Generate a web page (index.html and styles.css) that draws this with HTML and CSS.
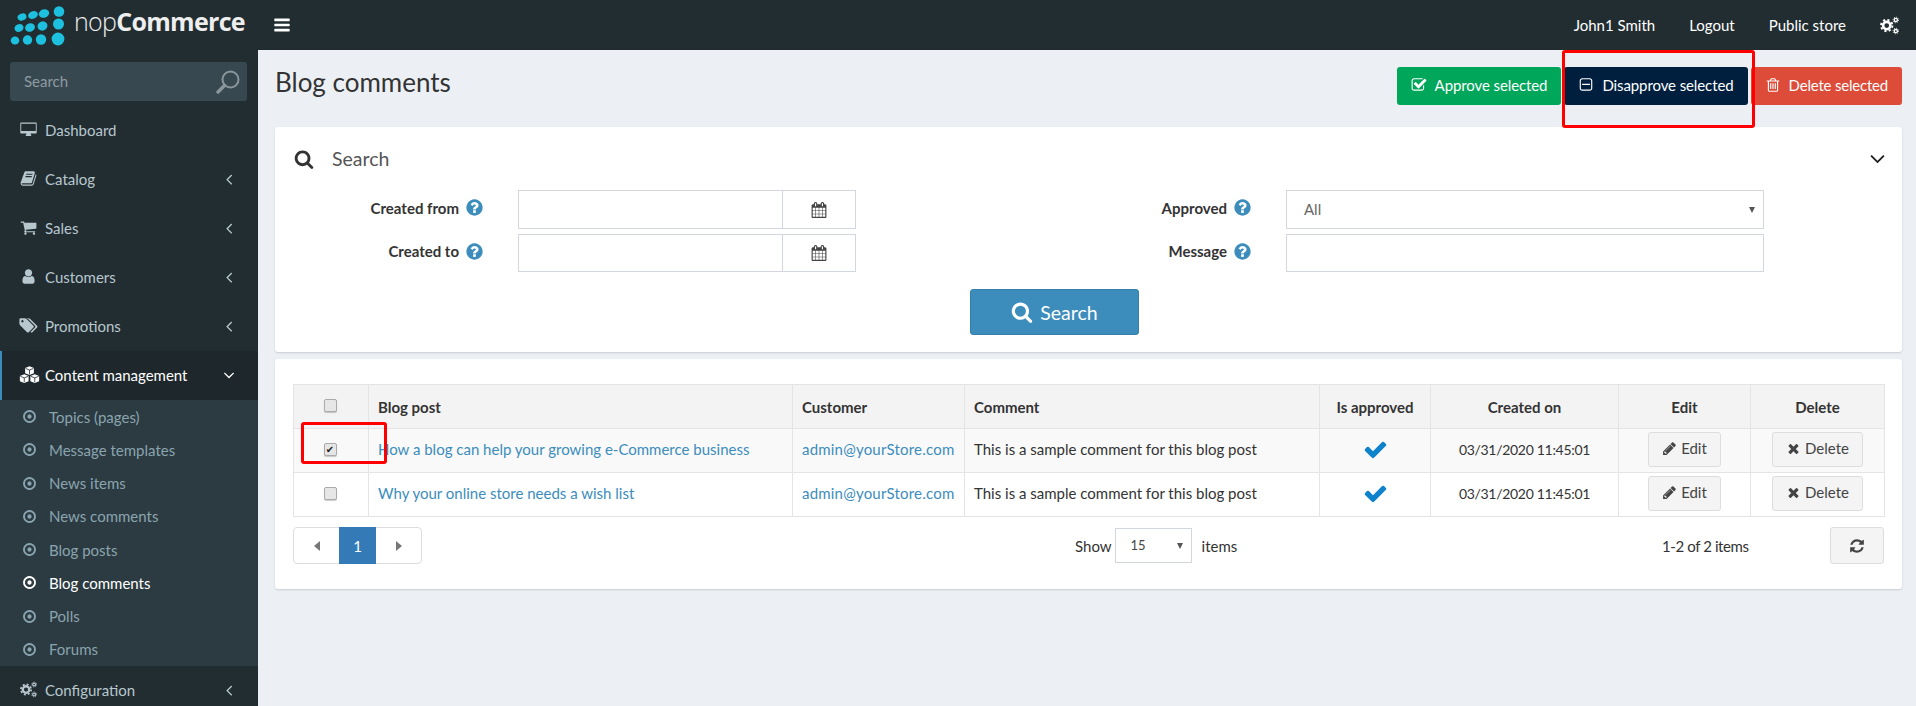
FILE: index.html
```html
<!DOCTYPE html>
<html lang="en">
<head>
    <meta charset="UTF-8">
    <meta name="viewport" content="width=device-width, initial-scale=1.0">
    <title>Blog comments</title>
    <link rel="stylesheet" href="styles.css">
</head>
<body>
    <!-- icon set -->
    <svg class="icon-defs" xmlns="http://www.w3.org/2000/svg">
        <symbol id="i-search" viewBox="0 0 1792 1792"><path d="M1216 832q0-185-131.500-316.500t-316.500-131.500-316.500 131.500-131.500 316.500 131.500 316.500 316.500 131.500 316.500-131.500 131.500-316.500zm512 832q0 52-38 90t-90 38q-54 0-90-38l-343-342q-179 124-399 124-143 0-273.500-55.500t-225-150-150-225-55.500-273.500 55.500-273.500 150-225 225-150 273.500-55.500 273.500 55.500 225 150 150 225 55.500 273.500q0 220-124 399l343 343q37 37 37 90z"/></symbol>
        <symbol id="i-left" viewBox="0 0 1792 1792"><path d="M1203 544q0 13-10 23l-393 393 393 393q10 10 10 23t-10 23l-50 50q-10 10-23 10t-23-10l-466-466q-10-10-10-23t10-23l466-466q10-10 23-10t23 10l50 50q10 10 10 23z"/></symbol>
        <symbol id="i-down" viewBox="0 0 1792 1792"><path d="M1395 736q0 13-10 23l-466 466q-10 10-23 10t-23-10l-466-466q-10-10-10-23t10-23l50-50q10-10 23-10t23 10l393 393 393-393q10-10 23-10t23 10l50 50q10 10 10 23z"/></symbol>
        <symbol id="i-check" viewBox="0 0 1792 1792"><path d="M1671 566q0 40-28 68l-724 724-136 136q-28 28-68 28t-68-28l-136-136-362-362q-28-28-28-68t28-68l136-136q28-28 68-28t68 28l294 295 656-657q28-28 68-28t68 28l136 136q28 28 28 68z"/></symbol>
        <symbol id="i-times" viewBox="0 0 1792 1792"><path d="M1490 1322q0 40-28 68l-136 136q-28 28-68 28t-68-28l-294-294-294 294q-28 28-68 28t-68-28l-136-136q-28-28-28-68t28-68l294-294-294-294q-28-28-28-68t28-68l136-136q28-28 68-28t68 28l294 294 294-294q28-28 68-28t68 28l136 136q28 28 28 68t-28 68l-294 294 294 294q28 28 28 68z"/></symbol>
        <symbol id="i-help" viewBox="0 0 1792 1792"><path d="M1024 1376v-192q0-14-9-23t-23-9h-192q-14 0-23 9t-9 23v192q0 14 9 23t23 9h192q14 0 23-9t9-23zm256-672q0-88-55.500-163t-138.500-116-170-41q-243 0-371 213-15 24 8 42l132 100q7 6 19 6 16 0 25-12 53-68 86-92 34-24 86-24 48 0 85.500 26t37.500 59q0 38-20 61t-68 45q-63 28-115.500 86.500t-52.500 125.500v36q0 14 9 23t23 9h192q14 0 23-9t9-23q0-19 21.500-49.500t54.500-49.500q32-18 49-28.500t46-35 44.500-48 28-60.500 12.500-81zm384 192q0 209-103 385.500t-279.500 279.500-385.500 103-385.500-103-279.500-279.500-103-385.500 103-385.500 279.500-279.500 385.500-103 385.500 103 279.500 279.500 103 385.500z"/></symbol>
        <symbol id="i-dot" viewBox="0 0 1792 1792"><path d="M1152 896q0 106-75 181t-181 75-181-75-75-181 75-181 181-75 181 75 75 181zm-256-544q-148 0-273 73t-198 198-73 273 73 273 198 198 273 73 273-73 198-198 73-273-73-273-198-198-273-73zm768 544q0 209-103 385.500t-279.500 279.500-385.500 103-385.500-103-279.500-279.500-103-385.500 103-385.500 279.500-279.500 385.500-103 385.500 103 279.500 279.500 103 385.500z"/></symbol>
        <symbol id="i-bars" viewBox="0 0 1792 1792"><path d="M1664 1344v128q0 26-19 45t-45 19h-1408q-26 0-45-19t-19-45v-128q0-26 19-45t45-19h1408q26 0 45 19t19 45zm0-512v128q0 26-19 45t-45 19h-1408q-26 0-45-19t-19-45v-128q0-26 19-45t45-19h1408q26 0 45 19t19 45zm0-512v128q0 26-19 45t-45 19h-1408q-26 0-45-19t-19-45v-128q0-26 19-45t45-19h1408q26 0 45 19t19 45z"/></symbol>
        <symbol id="i-pencil" viewBox="0 0 1792 1792"><path d="M491 1536l91-91-235-235-91 91v107h128v128h107zm523-928q0-22-22-22-10 0-17 7l-542 542q-7 7-7 17 0 22 22 22 10 0 17-7l542-542q7-7 7-17zm-54-192l416 416-832 832h-416v-416zm683 96q0 53-37 90l-166 166-416-416 166-165q36-38 90-38 53 0 91 38l235 234q37 39 37 91z"/></symbol>
        <symbol id="i-refresh" viewBox="0 0 1792 1792"><path d="M1639 1056q0 5-1 7-64 268-268 434.500t-478 166.500q-146 0-282.500-55t-243.500-157l-129 129q-19 19-45 19t-45-19-19-45v-448q0-26 19-45t45-19h448q26 0 45 19t19 45-19 45l-137 137q71 66 161 102t187 36q134 0 250-65t186-179q11-17 53-117 8-23 30-23h192q13 0 22.500 9.500t9.500 22.500zm25-800v448q0 26-19 45t-45 19h-448q-26 0-45-19t-19-45 19-45l138-138q-148-137-349-137-134 0-250 65t-186 179q-11 17-53 117-8 23-30 23h-199q-13 0-22.500-9.500t-9.500-22.500v-7q65-268 270-434.500t480-166.500q146 0 284 55.500t245 156.500l130-129q19-19 45-19t45 19 19 45z"/></symbol>
        <symbol id="i-desktop" viewBox="0 0 1920 1792"><path fill-rule="evenodd" d="M160 160h1600q64 0 64 64v1024q0 64-64 64h-576q0 90 64 192v64h-576v-64q64-102 64-192h-576q-64 0-64-64v-1024q0-64 64-64zm32 128v768h1536v-768z"/></symbol>
        <symbol id="i-book" viewBox="0 0 1792 1792"><path d="M1703 478q40 57 18 129l-275 906q-19 64-76.500 107.500t-122.500 43.500h-923q-77 0-148.500-53.500t-99.500-131.500q-24-67-2-127 0-4 3-27t4-37q1-8-3-21.500t-3-19.500q2-11 8-21t16.500-23.500 16.500-23.500q23-38 45-91.500t30-91.500q3-10 .5-30t-.5-28q3-11 17-28t17-23q21-36 42-92t25-90q1-9-2.500-32t.5-28q4-13 22-30.500t22-22.500q19-26 42.500-84.500t27.500-96.500q1-8-3-25.500t-2-26.500q2-8 9-18t18-23 17-21q8-12 16.500-30.500t15-35 16-36 19.500-32 26.500-23.500 36-11.500 47.500 5.500l-1 3q38-9 51-9h761q74 0 114 56t18 130l-274 906q-36 119-71.500 153.500t-128.500 34.500h-869q-27 0-38 15-11 16-1 43 24 70 144 70h923q29 0 56-15.500t35-41.500l300-987q7-22 5-57 38 15 59 43zm-1064 2q-4 13 2 22.500t20 9.500h608q13 0 25.500-9.500t16.500-22.500l21-64q4-13-2-22.500t-20-9.500h-608q-13 0-25.500 9.500t-16.500 22.500zm-83 256q-4 13 2 22.500t20 9.500h608q13 0 25.500-9.500t16.500-22.500l21-64q4-13-2-22.500t-20-9.500h-608q-13 0-25.500 9.500t-16.500 22.500z"/></symbol>
        <symbol id="i-cart" viewBox="0 0 1792 1792"><path d="M704 1536q0 52-38 90t-90 38-90-38-38-90 38-90 90-38 90 38 38 90zm896 0q0 52-38 90t-90 38-90-38-38-90 38-90 90-38 90 38 38 90zm128-1088v512q0 24-16.500 42.500t-40.500 21.500l-1044 122q13 60 13 70 0 16-24 64h920q26 0 45 19t19 45-19 45-45 19h-1024q-26 0-45-19t-19-45q0-11 8-31.500t16-36 21.500-40 15.500-29.500l-177-823h-204q-26 0-45-19t-19-45 19-45 45-19h256q16 0 28.500 6.500t19.500 15.500 13 24.500 8 26 5.500 29.500 4.500 26h1201q26 0 45 19t19 45z"/></symbol>
        <symbol id="i-user" viewBox="0 0 1792 1792"><path d="M1536 1399q0 109-62.500 187t-150.500 78h-854q-88 0-150.500-78t-62.500-187q0-85 8.500-160.500t31.500-152 58.500-131 94-89 134.500-34.500q131 128 313 128t313-128q76 0 134.500 34.500t94 89 58.500 131 31.500 152 8.500 160.500zm-256-887q0 159-112.500 271.500t-271.500 112.500-271.500-112.500-112.500-271.500 112.500-271.500 271.500-112.500 271.500 112.500 112.500 271.500z"/></symbol>
        <symbol id="i-tags" viewBox="0 0 1920 1792"><path d="M448 448q0-53-37.500-90.500t-90.500-37.500-90.500 37.500-37.500 90.500 37.500 90.500 90.500 37.500 90.500-37.500 37.500-90.500zm1067 576q0 53-37 90l-491 492q-39 37-91 37-53 0-90-37l-715-716q-38-37-64.500-101t-26.500-117v-416q0-52 38-90t90-38h416q53 0 117 26.500t102 64.500l715 714q37 39 37 91zm384 0q0 53-37 90l-491 492q-39 37-91 37-36 0-59-14t-53-45l470-470q37-37 37-90 0-52-37-91l-715-714q-38-38-102-64.500t-117-26.500h224q53 0 117 26.500t102 64.500l715 714q37 39 37 91z"/></symbol>
        <symbol id="i-calendar" viewBox="0 0 1664 1792"><path d="M128 1664h288v-288h-288v288zm352 0h320v-288h-320v288zm-352-352h288v-320h-288v320zm352 0h320v-320h-320v320zm-352-384h288v-288h-288v288zm736 736h320v-288h-320v288zm-384-736h320v-288h-320v288zm768 736h288v-288h-288v288zm-384-352h320v-320h-320v320zm-352-864v-288q0-13-9.500-22.500t-22.500-9.500h-64q-13 0-22.500 9.500t-9.500 22.500v288q0 13 9.500 22.500t22.500 9.500h64q13 0 22.500-9.500t9.500-22.500zm736 864h288v-320h-288v320zm-384-384h320v-288h-320v288zm384 0h288v-288h-288v288zm32-480v-288q0-13-9.500-22.500t-22.500-9.500h-64q-13 0-22.500 9.500t-9.500 22.500v288q0 13 9.500 22.500t22.500 9.500h64q13 0 22.500-9.500t9.500-22.500zm384-64v1280q0 52-38 90t-90 38h-1408q-52 0-90-38t-38-90v-1280q0-52 38-90t90-38h128v-96q0-66 47-113t113-47h64q66 0 113 47t47 113v96h384v-96q0-66 47-113t113-47h64q66 0 113 47t47 113v96h128q52 0 90 38t38 90z"/></symbol>
        <symbol id="i-approve" viewBox="0 0 1792 1792"><path d="M1472 930v318q0 119-84.500 203.500t-203.500 84.500h-832q-119 0-203.500-84.500t-84.500-203.500v-832q0-119 84.500-203.500t203.500-84.500h832q63 0 117 25 15 7 18 23 3 17-9 29l-49 49q-10 10-23 10-3 0-9-2-23-6-45-6h-832q-66 0-113 47t-47 113v832q0 66 47 113t113 47h832q66 0 113-47t47-113v-254q0-13 9-22l64-64q10-10 23-10 6 0 12 3 20 8 20 29zm231-489l-814 814q-24 24-57 24t-57-24l-430-430q-24-24-24-57t24-57l110-110q24-24 57-24t57 24l263 263 647-647q24-24 57-24t57 24l110 110q24 24 24 57t-24 57z"/></symbol>
        <symbol id="i-minus" viewBox="0 0 1792 1792"><path d="M1344 800v64q0 14-9 23t-23 9h-832q-14 0-23-9t-9-23v-64q0-14 9-23t23-9h832q14 0 23 9t9 23zm128 448v-832q0-66-47-113t-113-47h-832q-66 0-113 47t-47 113v832q0 66 47 113t113 47h832q66 0 113-47t47-113zm128-832v832q0 119-84.500 203.500t-203.500 84.500h-832q-119 0-203.500-84.500t-84.500-203.500v-832q0-119 84.500-203.500t203.500-84.500h832q119 0 203.500 84.500t84.500 203.500z"/></symbol>
        <symbol id="i-trash" viewBox="0 0 1792 1792"><path d="M704 736v576q0 14-9 23t-23 9h-64q-14 0-23-9t-9-23v-576q0-14 9-23t23-9h64q14 0 23 9t9 23zm256 0v576q0 14-9 23t-23 9h-64q-14 0-23-9t-9-23v-576q0-14 9-23t23-9h64q14 0 23 9t9 23zm256 0v576q0 14-9 23t-23 9h-64q-14 0-23-9t-9-23v-576q0-14 9-23t23-9h64q14 0 23 9t9 23zm128 724v-948h-896v948q0 22 7 40.500t14.500 27 10.500 8.500h832q3 0 10.500-8.500t14.500-27 7-40.500zm-672-1076h448l-48-117q-7-9-17-11h-317q-10 2-17 11zm928 32v64q0 14-9 23t-23 9h-96v948q0 83-47 143.500t-113 60.500h-832q-66 0-113-58.500t-47-141.500v-952h-96q-14 0-23-9t-9-23v-64q0-14 9-23t23-9h309l70-167q15-37 54-63t79-26h320q40 0 79 26t54 63l70 167h309q14 0 23 9t9 23z"/></symbol>
        <symbol id="i-cogs" viewBox="0 0 24 24">
            <circle cx="8.500" cy="12" r="4.600" fill="none" stroke="currentColor" stroke-width="3.200"/>
            <circle cx="8.500" cy="12" r="7.200" fill="none" stroke="currentColor" stroke-width="2.400" stroke-dasharray="2.800 2.850"/>
            <circle cx="20" cy="5" r="2" fill="none" stroke="currentColor" stroke-width="1.700"/>
            <circle cx="20" cy="5" r="3.500" fill="none" stroke="currentColor" stroke-width="1.200" stroke-dasharray="1.300 1.450"/>
            <circle cx="20" cy="19" r="2" fill="none" stroke="currentColor" stroke-width="1.700"/>
            <circle cx="20" cy="19" r="3.500" fill="none" stroke="currentColor" stroke-width="1.200" stroke-dasharray="1.300 1.450"/>
        </symbol>
        <symbol id="i-cubes" viewBox="0 0 24 20">
            <path d="M12 0l5 2v6l-5 2-5-2V2z"/>
            <path d="M6 9l5 2v6l-5 2-5-2v-6z"/>
            <path d="M18 9l5 2v6l-5 2-5-2v-6z"/>
            <path d="M7.500 2.500l4.500 1.800 4.500-1.800M12 4.300v5M1.500 11.500l4.500 1.800 4.500-1.800M6 13.300v5M13.500 11.500l4.500 1.800 4.500-1.800M18 13.300v5" fill="none" stroke="#1e282c" stroke-width=".9"/>
        </symbol>
    </svg>

    <header class="topbar">
        <a class="logo" href="#">
            <svg class="logo-dots" viewBox="0 0 66 42">
                <ellipse cx="22" cy="13" rx="4.600" ry="3.400" transform="rotate(-20 22 13)"/>
                <ellipse cx="33" cy="11" rx="5" ry="3.800" transform="rotate(-20 33 11)"/>
                <ellipse cx="44" cy="9.500" rx="5.300" ry="4.200" transform="rotate(-20 44 9.500)"/>
                <circle cx="59" cy="7.500" r="5.300"/>
                <ellipse cx="19" cy="24" rx="4.600" ry="3.800" transform="rotate(-20 19 24)"/>
                <ellipse cx="30" cy="23.500" rx="5" ry="4.200" transform="rotate(-20 30 23.500)"/>
                <ellipse cx="42.500" cy="22" rx="5" ry="4.600" transform="rotate(-20 42.500 22)"/>
                <circle cx="58.500" cy="20" r="5.500"/>
                <ellipse cx="15" cy="36.500" rx="4.300" ry="4" />
                <circle cx="27.500" cy="36" r="4.700"/>
                <circle cx="41" cy="35.500" r="5.200"/>
                <circle cx="58" cy="35" r="6.400"/>
            </svg>
            <span class="logo-text">nop<b>Commerce</b></span>
        </a>
        <a class="menu-toggle" href="#"><svg class="icon"><use href="#i-bars"/></svg></a>
        <nav class="top-links">
            <a href="#">John1 Smith</a>
            <a href="#">Logout</a>
            <a href="#">Public store</a>
            <a class="top-cog" href="#"><svg class="icon"><use href="#i-cogs"/></svg></a>
        </nav>
    </header>

    <div class="layout">
        <aside class="sidebar">
            <div class="side-search">
                <input type="text" placeholder="Search">
                <svg class="side-search-icon" viewBox="0 0 24 24" fill="none" stroke="currentColor">
                    <circle cx="14.500" cy="9.500" r="8" stroke-width="2"/>
                    <path d="M8.500 15.500L2 22" stroke-width="3.400" stroke-linecap="round"/>
                </svg>
            </div>
            <ul class="menu">
                <li class="menu-item"><svg class="icon"><use href="#i-desktop"/></svg><span>Dashboard</span></li>
                <li class="menu-item"><svg class="icon"><use href="#i-book"/></svg><span>Catalog</span><svg class="icon arrow"><use href="#i-left"/></svg></li>
                <li class="menu-item"><svg class="icon"><use href="#i-cart"/></svg><span>Sales</span><svg class="icon arrow"><use href="#i-left"/></svg></li>
                <li class="menu-item"><svg class="icon"><use href="#i-user"/></svg><span>Customers</span><svg class="icon arrow"><use href="#i-left"/></svg></li>
                <li class="menu-item"><svg class="icon"><use href="#i-tags"/></svg><span>Promotions</span><svg class="icon arrow"><use href="#i-left"/></svg></li>
                <li class="menu-item open"><svg class="icon"><use href="#i-cubes"/></svg><span>Content management</span><svg class="icon arrow"><use href="#i-down"/></svg></li>
                <li>
                    <ul class="submenu">
                        <li><svg class="icon"><use href="#i-dot"/></svg>Topics (pages)</li>
                        <li><svg class="icon"><use href="#i-dot"/></svg>Message templates</li>
                        <li><svg class="icon"><use href="#i-dot"/></svg>News items</li>
                        <li><svg class="icon"><use href="#i-dot"/></svg>News comments</li>
                        <li><svg class="icon"><use href="#i-dot"/></svg>Blog posts</li>
                        <li class="current"><svg class="icon"><use href="#i-dot"/></svg>Blog comments</li>
                        <li><svg class="icon"><use href="#i-dot"/></svg>Polls</li>
                        <li><svg class="icon"><use href="#i-dot"/></svg>Forums</li>
                    </ul>
                </li>
                <li class="menu-item"><svg class="icon"><use href="#i-cogs"/></svg><span>Configuration</span><svg class="icon arrow"><use href="#i-left"/></svg></li>
            </ul>
        </aside>

        <main class="content">
            <div class="page-head">
                <h1>Blog comments</h1>
                <div class="actions">
                    <button class="btn btn-green"><svg class="icon"><use href="#i-approve"/></svg>Approve selected</button>
                    <button class="btn btn-navy"><svg class="icon"><use href="#i-minus"/></svg>Disapprove selected</button>
                    <button class="btn btn-red"><svg class="icon"><use href="#i-trash"/></svg>Delete selected</button>
                </div>
            </div>

            <section class="card card-search">
                <div class="search-head">
                    <svg class="icon"><use href="#i-search"/></svg>
                    <span>Search</span>
                    <svg class="icon collapse"><use href="#i-down"/></svg>
                </div>
                <div class="search-form">
                    <label>Created from <svg class="icon help"><use href="#i-help"/></svg></label>
                    <div class="date-field"><input type="text"><span class="addon"><svg class="icon"><use href="#i-calendar"/></svg></span></div>
                    <label>Approved <svg class="icon help"><use href="#i-help"/></svg></label>
                    <div class="select-field"><select><option>All</option></select></div>
                    <label>Created to <svg class="icon help"><use href="#i-help"/></svg></label>
                    <div class="date-field"><input type="text"><span class="addon"><svg class="icon"><use href="#i-calendar"/></svg></span></div>
                    <label>Message <svg class="icon help"><use href="#i-help"/></svg></label>
                    <input class="plain-input" type="text">
                </div>
                <div class="search-actions">
                    <button class="btn-search"><svg class="icon"><use href="#i-search"/></svg>Search</button>
                </div>
            </section>

            <section class="card card-grid">
                <table class="grid">
                    <thead>
                        <tr>
                            <th class="col-check"><input type="checkbox"></th>
                            <th class="col-post left">Blog post</th>
                            <th class="col-customer left">Customer</th>
                            <th class="col-comment left">Comment</th>
                            <th class="col-approved">Is approved</th>
                            <th class="col-created">Created on</th>
                            <th class="col-edit">Edit</th>
                            <th class="col-delete">Delete</th>
                        </tr>
                    </thead>
                    <tbody>
                        <tr class="odd">
                            <td><input type="checkbox" checked></td>
                            <td class="left"><a href="#">How a blog can help your growing e-Commerce business</a></td>
                            <td class="left"><a class="mail" href="#">admin@yourStore.com</a></td>
                            <td class="left">This is a sample comment for this blog post</td>
                            <td><svg class="icon tick"><use href="#i-check"/></svg></td>
                            <td class="date">03/31/2020 11:45:01</td>
                            <td><button class="btn-row"><svg class="icon"><use href="#i-pencil"/></svg>Edit</button></td>
                            <td><button class="btn-row"><svg class="icon"><use href="#i-times"/></svg>Delete</button></td>
                        </tr>
                        <tr>
                            <td><input type="checkbox"></td>
                            <td class="left"><a href="#">Why your online store needs a wish list</a></td>
                            <td class="left"><a class="mail" href="#">admin@yourStore.com</a></td>
                            <td class="left">This is a sample comment for this blog post</td>
                            <td><svg class="icon tick"><use href="#i-check"/></svg></td>
                            <td class="date">03/31/2020 11:45:01</td>
                            <td><button class="btn-row"><svg class="icon"><use href="#i-pencil"/></svg>Edit</button></td>
                            <td><button class="btn-row"><svg class="icon"><use href="#i-times"/></svg>Delete</button></td>
                        </tr>
                    </tbody>
                </table>
                <div class="grid-foot">
                    <div class="pager">
                        <span class="page-arrow prev"></span>
                        <span class="page-num">1</span>
                        <span class="page-arrow next"></span>
                    </div>
                    <div class="page-size">
                        Show
                        <div class="select-field"><select><option>15</option></select></div>
                        items
                    </div>
                    <div class="page-info">
                        <span>1-2 of 2 items</span>
                        <button class="btn-refresh"><svg class="icon"><use href="#i-refresh"/></svg></button>
                    </div>
                </div>
            </section>

            <!-- red annotation boxes drawn on the screenshot -->
            <div class="mark mark-button"></div>
            <div class="mark mark-check"></div>
        </main>
    </div>
</body>
</html>
```

FILE: styles.css
```css
:root {
    --dark: #222d32;
    --sub: #2c3b41;
    --page: #ecf0f5;
    --blue: #3c8dbc;
    --line: #e4e4e4;
    --field: #d2d6de;
}

* {
    box-sizing: border-box;
}

html, body {
    height: 100%;
}

body {
    margin: 0;
    overflow: hidden;
    font-family: Lato, "Noto Sans", sans-serif;
    font-size: 15px;
    color: #333;
    background: var(--page);
    display: flex;
    flex-direction: column;
}

a {
    color: #3c8dbc;
    text-decoration: none;
}

ul {
    list-style: none;
    margin: 0;
    padding: 0;
}

.icon-defs {
    display: none;
}

.icon {
    width: 16px;
    height: 16px;
    fill: currentColor;
    flex: none;
}

/* top bar */
.topbar {
    height: 50px;
    flex: none;
    background: var(--dark);
    display: flex;
    align-items: center;
}

.logo {
    width: 258px;
    height: 50px;
    flex: none;
    display: flex;
    align-items: center;
    color: #eee;
}

.logo-dots {
    width: 66px;
    height: 42px;
    fill: #1dc0de;
    flex: none;
}

.logo-text {
    font-family: "Open Sans", sans-serif;
    font-size: 25px;
    font-weight: 300;
    letter-spacing: -0.7px;
    margin: -8px 0 0 8px;
}

.logo-text b {
    font-weight: 700;
}

.menu-toggle {
    color: #fff;
    margin-left: 15px;
    display: flex;
}

.menu-toggle .icon {
    width: 18px;
    height: 18px;
}

.top-links {
    margin-left: auto;
    display: flex;
    align-items: center;
    gap: 34px;
    padding-right: 17px;
}

.top-links a {
    color: #fff;
}

.top-cog {
    display: flex;
}

.top-cog .icon {
    width: 19px;
    height: 19px;
}

/* sidebar */
.layout {
    flex: 1;
    display: flex;
    min-height: 0;
}

.sidebar {
    width: 258px;
    flex: none;
    background: var(--dark);
    color: #b8c7ce;
    padding-top: 12px;
    overflow: hidden;
}

.side-search {
    height: 39px;
    margin: 0 11px 5px 10px;
    background: #374850;
    border-radius: 3px;
    display: flex;
    align-items: center;
    padding: 0 7px 0 14px;
}

.side-search input {
    flex: 1;
    min-width: 0;
    border: 0;
    padding: 0 0 2px;
    background: none;
    font: inherit;
    outline: none;
}

.side-search input::placeholder {
    color: #8e9ba1;
}

.side-search-icon {
    width: 24px;
    height: 24px;
    color: #8a969b;
    flex: none;
}

.menu-item {
    height: 49px;
    display: flex;
    align-items: center;
    padding: 0 20px 2px 19px;
}

.menu-item .icon:first-child {
    width: 19px;
    height: 17px;
    margin-right: 7px;
}

.menu-item .arrow {
    margin-left: auto;
    width: 18px;
    height: 18px;
    margin-right: 0;
}

.menu-item.open {
    color: #fff;
    background: #1e282c;
    border-left: 2px solid var(--blue);
    padding-left: 17px;
}

.menu-item.open .icon:first-child {
    width: 21px;
    height: 18px;
    margin-right: 5px;
}

.submenu {
    background: var(--sub);
    color: #8aa4af;
}

.submenu li {
    height: 33.25px;
    display: flex;
    align-items: center;
    padding-left: 22px;
}

.submenu .icon {
    width: 15px;
    height: 15px;
    margin-right: 12px;
}

.submenu .current {
    color: #fff;
}

/* page head */
.content {
    flex: 1;
    min-width: 0;
    position: relative;
    padding: 0 14px 0 17px;
}

.page-head {
    height: 77px;
    padding-top: 17px;
    display: flex;
    justify-content: space-between;
}

h1 {
    margin: 0;
    font-size: 26px;
    font-weight: 400;
    line-height: 30px;
}

.actions {
    display: flex;
    gap: 3px;
}

.btn {
    height: 38px;
    border: 0;
    border-radius: 3px;
    color: #fff;
    font: inherit;
    letter-spacing: -0.1px;
    padding: 0 14px 2px;
    display: flex;
    align-items: center;
    gap: 8px;
}

.btn-green {
    background: #00a65a;
}

.btn-navy {
    background: #001f3f;
}

.btn-red {
    background: #dd4b39;
    letter-spacing: -0.2px;
}

/* cards */
.card {
    background: #fff;
    border-radius: 3px;
    box-shadow: 0 1px 2px rgba(0, 0, 0, 0.15);
}

.card-search {
    height: 225px;
    margin-bottom: 7px;
}

.search-head {
    height: 63px;
    padding: 0 12px 0 19px;
    display: flex;
    align-items: center;
    font-size: 19.5px;
    color: #555;
}

.search-head .icon {
    width: 20px;
    height: 20px;
    color: #333;
}

.search-head span {
    margin-left: 18px;
}

.search-head .collapse {
    margin-left: auto;
    width: 25px;
    height: 25px;
    color: #222;
}

.search-form {
    display: grid;
    grid-template-columns: 243px 338px 430px 478px;
    grid-template-rows: 39px 38px;
    row-gap: 5px;
}

.search-form label {
    font-weight: 700;
    padding: 0 34px 4px 0;
    display: flex;
    align-items: center;
    justify-content: flex-end;
    gap: 6px;
    color: #333;
}

.help {
    width: 19px;
    height: 19px;
    color: #3c8dbc;
}

.search-form input,
.search-form select {
    font: inherit;
    border: 1px solid var(--field);
    background: #fff;
    outline: none;
    width: 100%;
    height: 100%;
}

.date-field {
    display: flex;
}

.date-field input {
    flex: 1;
    min-width: 0;
    width: auto;
}

.addon {
    width: 73px;
    border: 1px solid var(--field);
    border-left: 0;
    display: flex;
    align-items: center;
    justify-content: center;
    color: #444;
}

.select-field {
    position: relative;
}

.select-field::after {
    content: "";
    position: absolute;
    right: 9px;
    top: 50%;
    margin-top: -3px;
    border: 3.500px solid transparent;
    border-top: 6px solid #555;
    border-bottom: 0;
}

select {
    appearance: none;
    border-radius: 0;
    padding: 0 17px 2px;
    color: #666;
}

.search-actions {
    padding: 17px 0 0 695px;
}

.btn-search {
    width: 169px;
    height: 46px;
    font: inherit;
    font-size: 19.5px;
    color: #fff;
    background: var(--blue);
    border: 1px solid #367fa9;
    border-radius: 3px;
    display: flex;
    align-items: center;
    justify-content: center;
    gap: 7px;
}

.btn-search .icon {
    width: 22px;
    height: 22px;
}

/* table */
.card-grid {
    height: 230px;
    padding: 25px 18px 0;
}

.grid {
    width: 100%;
    table-layout: fixed;
    border-collapse: collapse;
    border: 1px solid var(--line);
}

.grid th,
.grid td {
    height: 44px;
    border: 1px solid var(--line);
    padding: 0 8px;
    text-align: center;
}

.grid td {
    padding-bottom: 3px;
}

.grid th {
    background: #f3f3f3;
    font-weight: 700;
}

.grid .left {
    text-align: left;
    padding-left: 9px;
}

.grid .odd td {
    background: #f9f9f9;
}

.col-check { width: 75px; }
.col-post { width: 424px; }
.col-customer { width: 172px; }
.col-comment { width: 355px; }
.col-approved { width: 111px; }
.col-created { width: 188px; }
.col-edit { width: 132px; }
.col-delete { width: 134px; }

.mail {
    letter-spacing: 0.2px;
}

.date {
    font-size: 14px;
    letter-spacing: -0.3px;
}

input[type="checkbox"] {
    appearance: none;
    width: 13px;
    height: 13px;
    margin: 0 2px 0 0;
    vertical-align: middle;
    position: relative;
    top: -2px;
    background: #e6e6e6;
    border: 1px solid #aaa;
    border-radius: 2px;
    box-shadow: 0 1px 1px rgba(0, 0, 0, 0.2);
}

th input[type="checkbox"] {
    top: -3px;
}

input[type="checkbox"]:checked::after {
    content: "\2714";
    position: absolute;
    left: 0;
    top: 0;
    width: 11px;
    text-align: center;
    font: 10px/11px "DejaVu Sans", sans-serif;
    color: #222;
}

.tick {
    width: 25px;
    height: 25px;
    color: #0f82cc;
    vertical-align: middle;
}

.btn-row {
    height: 35px;
    padding: 0 13px 2px;
    font: inherit;
    font-size: 15px;
    color: #444;
    background: #f4f4f4;
    border: 1px solid #ddd;
    border-radius: 3px;
    display: inline-flex;
    align-items: center;
    gap: 4px;
    vertical-align: middle;
}

.btn-row .icon {
    width: 15px;
    height: 15px;
}

.grid-foot {
    display: grid;
    grid-template-columns: 782px 587px 222px;
    margin-top: 10px;
    height: 37px;
    align-items: center;
}

.pager {
    width: 129px;
    height: 37px;
    display: flex;
    border: 1px solid #ddd;
    border-radius: 4px;
}

.page-arrow {
    display: flex;
    align-items: center;
    justify-content: center;
}

.prev {
    width: 45px;
}

.next {
    flex: 1;
}

.prev::before {
    content: "";
    border: 5px solid transparent;
    border-right: 6px solid #777;
    border-left: 0;
}

.next::before {
    content: "";
    border: 5px solid transparent;
    border-left: 6px solid #777;
    border-right: 0;
}

.page-num {
    width: 37px;
    margin: -1px 0;
    background: #337ab7;
    color: #fff;
    display: flex;
    align-items: center;
    justify-content: center;
}

.page-size {
    display: flex;
    align-items: center;
    gap: 3px;
}

.page-size .select-field {
    width: 77px;
    height: 35px;
    margin-right: 7px;
}

.page-size select {
    width: 100%;
    height: 100%;
    padding-left: 15px;
    border: 1px solid var(--field);
    background: #fff;
    color: #444;
    font: inherit;
    font-size: 13px;
}

.page-info {
    display: flex;
    align-items: center;
    justify-content: space-between;
    letter-spacing: -0.4px;
}

.btn-refresh {
    width: 54px;
    height: 37px;
    background: #f4f4f4;
    border: 1px solid #ddd;
    border-radius: 3px;
    color: #444;
    display: flex;
    align-items: center;
    justify-content: center;
}

/* annotations */
.mark {
    position: absolute;
    border: 3px solid #f00;
    border-radius: 3px;
}

.mark-button {
    left: 1304px;
    top: 0;
    width: 193px;
    height: 78px;
}

.mark-check {
    left: 43px;
    top: 372px;
    width: 86px;
    height: 42px;
}
```
